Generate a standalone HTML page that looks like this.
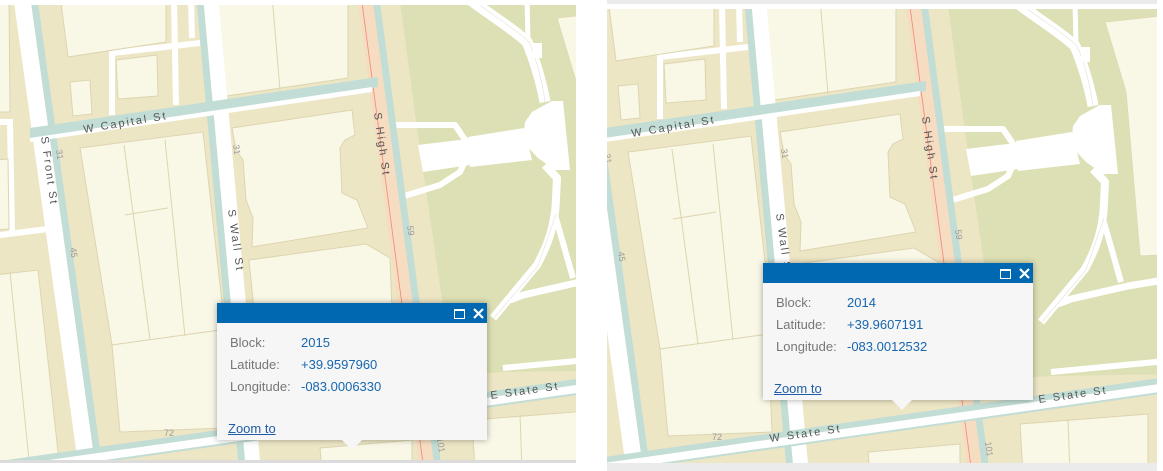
<!DOCTYPE html>
<html><head><meta charset="utf-8">
<style>
html,body{margin:0;padding:0;background:#fff;width:1163px;height:471px;overflow:hidden;position:relative;font-family:"Liberation Sans",sans-serif}
svg.m{position:absolute;left:0;top:0}
.pop{position:absolute;width:270px;background:#f6f6f6;box-shadow:0 0 6px rgba(0,0,0,.35)}
.pop .hd{height:20px;background:#0067b1;position:relative}
.pop .mx{position:absolute;top:6px;width:9px;height:7px;border:1.5px solid #fff;border-top-width:2.5px}
.pop .row{position:absolute;left:13px;font-size:13px;color:#777;white-space:nowrap}
.pop .row span{position:absolute;left:71px;color:#1766b0}
.pop a{position:absolute;left:11px;font-size:13px;color:#1f5da8;text-decoration:underline}
.tri{position:absolute;width:0;height:0;border-left:10px solid transparent;border-right:10px solid transparent;border-top:10px solid #f6f6f6}
</style></head><body>
<svg class="m" width="1163" height="471" viewBox="0 0 1163 471">
<defs>
<clipPath id="cl"><rect x="0" y="5" width="576" height="455"/></clipPath>
<clipPath id="cr"><rect x="607" y="9" width="550" height="454"/></clipPath>
<g id="map">
<rect x="-50" y="-50" width="720" height="560" fill="#ede6c5"/>
<!-- park -->
<polygon points="397,-20 640,-20 640,370 505,372 455,375 442,300 420,150" fill="#dde0b4"/>
<!-- park paths -->
<g fill="none" stroke="#fff" stroke-linejoin="round">
<path d="M468,-2 C490,15 515,30 527,42 C535,60 542,85 545,102" stroke-width="11"/>
<path d="M527,-2 L528,42" stroke-width="5"/>
<path d="M386,125 L455,125 L470,147" stroke-width="6"/>
<path d="M398,198 L440,185 L460,172 L470,150" stroke-width="6"/>
<path d="M545,165 L557,178 C556,195 556,205 555,212 C552,235 545,250 537,265 L493,318" stroke-width="8"/>
<path d="M555,215 L573,278" stroke-width="6"/>
<path d="M510,300 L523,295 L580,282 L640,272" stroke-width="7"/>
<path d="M503,368 L640,355" stroke-width="6"/>
</g>
<g fill="none" stroke="#e6e6dc" stroke-width="0.7">
<path d="M470,-2 C492,15 517,30 529,42 C537,60 543,85 545,102"/>
<path d="M470,142 L524,137"/><path d="M470,158 L528,155"/>
<path d="M556,214 L538,266 L494,318"/>
</g>
<rect x="533" y="43" width="9" height="15" fill="#fff"/>
<polygon points="418,145 468,139 470,165 423,172" fill="#fff"/>
<polygon points="468,137 524,128 532,160 470,167" fill="#fff"/>
<polygon points="532,112 552,101 563,101 570,170 555,170 538,158 523,142 525,122" fill="#fff"/>
<polygon points="557,18 630,10 630,250 592,252 578,88" fill="#f9f7e6" stroke="#e0d9b6"/>
<!-- top-left white paths -->
<g fill="none" stroke="#fff" stroke-width="6">
<path d="M112,115 L112,53 L200,43"/>
<path d="M174,0 L176,105"/>
<path d="M191,0 L192,38"/>
<path d="M0,235 L48,229"/>
<path d="M0,122 L10,122 L12,232"/>
</g>
<!-- buildings -->
<g fill="#f9f7e6" stroke="#ddd5b0" stroke-width="1">
<polygon points="60,-5 166,-5 166,42 68,57"/>
<polygon points="70,82 90,80 92,114 73,116"/>
<polygon points="116,60 157,55 158,96 118,99"/>
<polygon points="-5,-5 9,-5 10,112 -5,112"/>
<polygon points="210,-5 348,-5 348,78 220,97"/>
<polygon points="80,148 203,132 225,330 112,345"/>
<polygon points="112,345 220,330 224,428 120,432"/>
<polygon points="232,128 352,110 355,135 345,140 340,148 342,193 357,200 368,228 252,247 253,218 246,200 243,160 236,150"/>
<polygon points="249,260 366,244 390,258 392,312 255,320"/>
<polygon points="-5,160 8,159 9,229 -5,230"/>
<polygon points="-5,275 38,270 60,470 -5,470"/>
<polygon points="472,420 600,410 600,470 475,470"/>
<polygon points="320,448 412,440 412,470 322,470"/>
</g>
<g fill="none" stroke="#ddd5b0">
<path d="M272,-5 L280,90"/><path d="M124,145 L150,340"/><path d="M165,140 L185,336"/><path d="M125,215 L168,208"/><path d="M10,272 L30,470"/><path d="M520,415 L522,470"/>
</g>
<!-- S Front -->
<polygon points="13,-5 30,-5 96,471 79,471" fill="#fff"/>
<polygon points="30,-5 37,-5 103,471 96,471" fill="#c2ddd6"/>
<!-- S Wall -->
<polygon points="196,-5 203,-5 246,471 239,471" fill="#c2ddd6"/>
<polygon points="203,-5 218,-5 261,471 246,471" fill="#fff"/>
<!-- S High -->
<polygon points="357,-5 372,-5 435,471 420,471" fill="#f6dcc0"/>
<line x1="361" y1="-5" x2="424" y2="471" stroke="#ee8a78" stroke-width="0.8"/>
<polygon points="372,-5 379,-5 442,471 435,471" fill="#c2ddd6"/>
<!-- W Capital -->
<polygon points="30,128 378,77 378,87 30,138" fill="#c2ddd6"/>
<polygon points="30,138 372,87 372,92 30,142" fill="#fff"/>
<!-- W State -->
<polygon points="0,461 640,370 640,376 0,467" fill="#c2ddd6"/>
<polygon points="0,467 640,376 640,384 0,475" fill="#fff"/>
<polygon points="0,475 640,384 640,386 0,477" fill="#c2ddd6"/>
<!-- labels -->
<g font-family="Liberation Sans, sans-serif" font-size="11" fill="#555" letter-spacing="2">
<text transform="translate(84,133) rotate(-9.5)">W Capital St</text>
<text transform="translate(41,137) rotate(82)">S Front St</text>
<text transform="translate(228,210) rotate(82)">S Wall St</text>
<text transform="translate(374,113) rotate(82)">S High St</text>
<text transform="translate(491,399) rotate(-8)">E State St</text>
<text transform="translate(222,438) rotate(-8)">W State St</text>
</g>
<g font-family="Liberation Sans, sans-serif" font-size="9" fill="#999">
<text transform="translate(56,150) rotate(82)">31</text>
<text transform="translate(70,248) rotate(82)">45</text>
<text transform="translate(233,145) rotate(82)">31</text>
<text transform="translate(407,226) rotate(82)">59</text>
<text x="164" y="436">72</text>
<text transform="translate(437,438) rotate(82)">101</text>
</g>
</g>
</defs>
<rect x="607" y="0" width="550" height="4" fill="#ebebeb"/>
<rect x="0" y="460" width="576" height="3" fill="#dcdcdc"/>
<rect x="607" y="463" width="550" height="8" fill="#ebebeb"/>
<g clip-path="url(#cl)"><use href="#map"/></g>
<g clip-path="url(#cr)"><use href="#map" transform="translate(548,4)"/></g>
</svg>

<div class="pop" style="left:217px;top:303px;height:137px">
<div class="hd"><div class="mx" style="left:237px"></div><svg width="11" height="11" style="left:256px;top:5px;position:absolute"><path d="M1,1 L10,10 M10,1 L1,10" stroke="#fff" stroke-width="2.2"/></svg></div>
<div class="row" style="top:32px">Block:<span>2015</span></div>
<div class="row" style="top:54px">Latitude:<span>+39.9597960</span></div>
<div class="row" style="top:76px">Longitude:<span>-083.0006330</span></div>
<a style="top:118px">Zoom to</a>
</div>
<div class="tri" style="left:342px;top:440px"></div>

<div class="pop" style="left:763px;top:263px;height:137px">
<div class="hd"><div class="mx" style="left:237px"></div><svg width="11" height="11" style="left:256px;top:5px;position:absolute"><path d="M1,1 L10,10 M10,1 L1,10" stroke="#fff" stroke-width="2.2"/></svg></div>
<div class="row" style="top:32px">Block:<span>2014</span></div>
<div class="row" style="top:54px">Latitude:<span>+39.9607191</span></div>
<div class="row" style="top:76px">Longitude:<span>-083.0012532</span></div>
<a style="top:118px">Zoom to</a>
</div>
<div class="tri" style="left:892px;top:400px"></div>
</body></html>
